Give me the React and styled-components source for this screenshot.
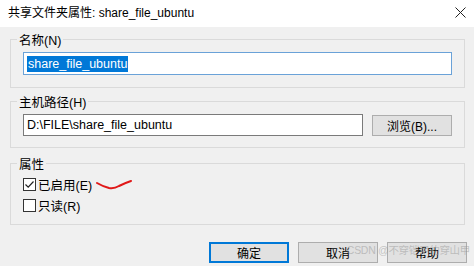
import React from 'react';
import styled, { createGlobalStyle } from 'styled-components';

const Global = createGlobalStyle`
  html, body { margin: 0; padding: 0; background: #f0f0f0; }
  * { box-sizing: border-box; }
`;

const Window = styled.div`
  position: relative;
  width: 474px;
  height: 266px;
  background: #f0f0f0;
  font-family: "Liberation Sans", "Noto Sans CJK SC", sans-serif;
  font-size: 12px;
  color: #000;
  display: flex;
  flex-direction: column;
  overflow: hidden;
`;

const TitleBar = styled.div`
  height: 27px;
  background: #fff;
  display: flex;
  align-items: center;
  justify-content: space-between;
  padding: 0 8px 2px 8px;
  flex-shrink: 0;
`;

const Title = styled.span`
  font-size: 12px;
  line-height: 16px;
`;

const Body = styled.div`
  flex: 1;
  display: flex;
  flex-direction: column;
  padding: 12px 9px 0 10px;
`;

const Group = styled.div`
  border: 1px solid #dadada;
  display: flex;
  flex-direction: column;
  padding: 0 12px ${p => p.$bottom}px 12px;
  margin-bottom: ${p => p.$gap}px;
`;

const Legend = styled.div`
  align-self: flex-start;
  margin: -7px 0 0 -6px;
  padding: 0 2px;
  background: #f0f0f0;
  line-height: 16px;
  font-size: 12.5px;
`;

const Field = styled.div`
  height: ${p => p.$h}px;
  margin-top: 3px;
  flex: 1;
  background: #fff;
  border: 1px solid ${p => (p.$focus ? '#6aa2d8' : '#7a7a7a')};
  display: flex;
  align-items: center;
  padding-left: 3px;
  font-size: 12.5px;
`;

const Selected = styled.span`
  background: #0078d7;
  color: #fff;
  line-height: 16px;
  padding: 0 1px;
`;

const Row = styled.div`
  display: flex;
  align-items: center;
  gap: 9px;
`;

const Button = styled.button`
  width: 80px;
  height: 21px;
  padding: 0;
  background: #e1e1e1;
  border: 1px solid ${p => (p.$primary ? '#0078d7' : '#adadad')};
  box-shadow: ${p => (p.$primary ? 'inset 0 0 0 1px #0078d7' : 'none')};
  font-family: inherit;
  font-size: 12px;
  color: #000;
  flex-shrink: 0;
`;

const CheckRow = styled.div`
  height: 21px;
  display: flex;
  align-items: center;
  font-size: 12.5px;
  margin-top: ${p => p.$first ? '1px' : '0'};
`;

const Box = styled.span`
  width: 13px;
  height: 13px;
  border: 1px solid #333;
  background: #fff;
  margin-right: 2px;
  display: inline-flex;
  align-items: center;
  justify-content: center;
`;

const Footer = styled.div`
  display: flex;
  justify-content: flex-end;
  gap: 9px;
  padding: 17px 7px 0 0;
  margin-right: -9px;
`;

const Watermark = styled.div`
  position: absolute;
  right: 4px;
  bottom: 9px;
  font-size: 10.5px;
  color: rgba(150, 150, 150, 0.5);
  pointer-events: none;
  letter-spacing: -0.3px;
`;

const Check = ({ checked, label, first, children }) => (
  <CheckRow $first={first}>
    <Box>
      {checked && (
        <svg width="11" height="11" viewBox="0 0 11 11">
          <path d="M1.5 5.5 L4.2 8.2 L9.5 2.5" fill="none" stroke="#222" strokeWidth="1.2" />
        </svg>
      )}
    </Box>
    {label}
    {children}
  </CheckRow>
);

export default function App() {
  return (
    <Window>
      <Global />
      <TitleBar>
        <Title>共享文件夹属性: share_file_ubuntu</Title>
        <svg width="11" height="11" viewBox="0 0 11 11">
          <path d="M0.5 0.5 L10.5 10.5 M10.5 0.5 L0.5 10.5" stroke="#222" strokeWidth="1" />
        </svg>
      </TitleBar>
      <Body>
        <Group $bottom={12} $gap={13}>
          <Legend>名称(N)</Legend>
          <Row>
            <Field $h={23} $focus>
              <Selected>share_file_ubuntu</Selected>
            </Field>
          </Row>
        </Group>
        <Group $bottom={11} $gap={15}>
          <Legend>主机路径(H)</Legend>
          <Row>
            <Field $h={22}>D:\FILE\share_file_ubuntu</Field>
            <Button style={{ marginTop: 3 }}>浏览(B)...</Button>
          </Row>
        </Group>
        <Group $bottom={8} $gap={0}>
          <Legend>属性</Legend>
          <Check checked label="已启用(E)" first>
            <svg width="36" height="10" viewBox="0 0 36 10" style={{ marginLeft: 4 }}>
              <path d="M1 3 Q6 6 13 8 Q18 9 23 6 Q29 3 35 1" fill="none" stroke="#e01818" strokeWidth="2" strokeLinecap="round" />
            </svg>
          </Check>
          <Check label="只读(R)" />
        </Group>
        <Footer>
          <Button $primary>确定</Button>
          <Button>取消</Button>
          <Button>帮助</Button>
        </Footer>
      </Body>
      <Watermark>CSDN @不穿铠甲的穿山甲</Watermark>
    </Window>
  );
}
